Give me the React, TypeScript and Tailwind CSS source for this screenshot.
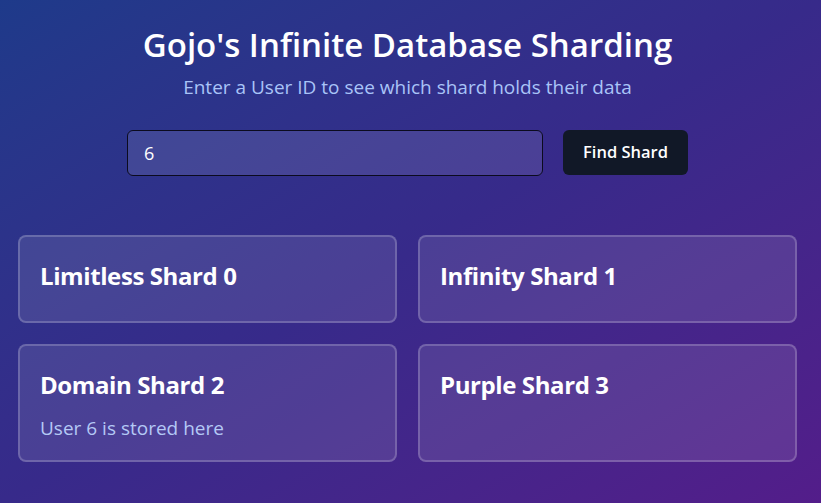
import React, { useState } from "react";

const shards = ["Limitless Shard 0", "Infinity Shard 1", "Domain Shard 2", "Purple Shard 3"];

export default function App() {
  const [value, setValue] = useState("6");
  const [found, setFound] = useState<number>(2);
  const font = { fontFamily: '"Open Sans", "Noto Sans", sans-serif' };
  return (
    <div
      className="min-h-[503px] w-full bg-gradient-to-br from-[#1e3a8a] via-[#372a8a] to-[#531d8a] text-white"
      style={font}
    >
      <div className="pl-[18px] pr-[24px] pt-[25px] pb-[40px]">
        <h1 className="text-center text-[33px] leading-[40px] font-semibold">
          Gojo's Infinite Database Sharding
        </h1>
        <p className="mt-[8px] text-center text-[19px] leading-[28px] text-[#a9c4f8]">
          Enter a User ID to see which shard holds their data
        </p>
        <div className="mt-[29px] flex justify-center gap-[20px]">
          <input
            value={value}
            onChange={(e) => setValue(e.target.value)}
            className="h-[46px] w-[416px] rounded-md border border-[#0b0b1e] bg-white/10 px-[16px] text-[18px] text-white outline-none"
          />
          <button
            onClick={() => {
              const n = parseInt(value, 10);
              if (!isNaN(n)) setFound(n % 4);
            }}
            className="h-[45px] w-[125px] rounded-md bg-[#111827] text-[16.5px] font-semibold text-white"
          >
            Find Shard
          </button>
        </div>
        <div className="mt-[59px] grid grid-cols-2 gap-x-[21px] gap-y-[21px]">
          {shards.map((s, i) => (
            <div
              key={s}
              className="rounded-lg border-2 border-white/20 bg-white/10 px-[20px] pt-[23px] pb-[17px]"
            >
              <h2 className="mb-[12px] text-[24px] leading-[32px] font-bold tracking-[-0.4px]">{s}</h2>
              {found === i && (
                <p className="text-[19px] leading-[30px] text-[#b4c9f5]">
                  User {value} is stored here
                </p>
              )}
            </div>
          ))}
        </div>
      </div>
    </div>
  );
}
